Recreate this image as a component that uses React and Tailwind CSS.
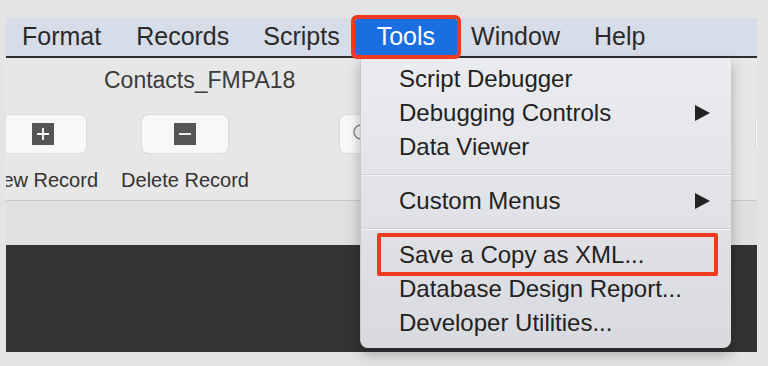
import React from "react";

const font = { fontFamily: '"Liberation Sans", Arial, sans-serif' };

const Arrow = () => (
  <svg width="15" height="16" viewBox="0 0 15 16" className="shrink-0">
    <polygon points="0,0 15,8 0,16" fill="#222" />
  </svg>
);

const MenuItem = ({ label, arrow, boxed }) => (
  <div className="relative flex h-[34px] items-center pl-[38px] pr-[21px] text-[24px] text-[#222]">
    <span className="flex-1 whitespace-nowrap">{label}</span>
    {arrow && <Arrow />}
    {boxed && (
      <div className="absolute -top-[5px] -bottom-[4px] left-[16px] right-[13px] rounded-[2px] border-[4px] border-[#f03a1f]" />
    )}
  </div>
);

const Separator = () => (
  <div className="mb-[9px] mt-[10px] h-[1px] bg-[#cfd0d5] shadow-[0_1px_0_#f4f4f6]" />
);

const ToolButton = ({ children, label, className, btnClassName = "justify-center" }) => (
  <div className={`flex w-[120px] shrink-0 flex-col items-center ${className}`}>
    <div
      className={`flex h-[38px] w-[86px] items-center rounded-[6px] bg-[#f8f8f8] shadow-[0_0_0_1px_#dadada] ${btnClassName}`}
    >
      {children}
    </div>
    {label && (
      <div className="mt-[15px] h-[24px] whitespace-nowrap text-[20px] leading-[24px] text-[#333]">
        {label}
      </div>
    )}
  </div>
);

export default function App() {
  return (
    <div
      className="h-[366px] w-[768px] overflow-hidden bg-[#e4e4e4] pl-[6px] pt-[18px]"
      style={font}
    >
      <div className="relative flex h-[334px] w-[751px] flex-col">
        {/* menu bar */}
        <div className="flex h-[40px] shrink-0 items-center border-b-[2px] border-[#2e2e2e] bg-[#d6dde9] pl-[16px] text-[25px] text-[#2a2a2a]">
          <span>Format</span>
          <span className="ml-[35px]">Records</span>
          <span className="ml-[34px]">Scripts</span>
          <span className="relative z-20 ml-[15px] flex h-[36px] items-center rounded-[2px] bg-[#1a6fe0] px-[22px] text-white outline outline-[4px] outline-[#f03a1f]">
            Tools
          </span>
          <span className="ml-[14px]">Window</span>
          <span className="ml-[34px]">Help</span>
        </div>

        {/* window body */}
        <div className="flex flex-1 flex-col overflow-hidden bg-[#e7e7e7]">
          <div className="flex h-[44px] shrink-0 items-center pl-[98px] text-[23px] text-[#3b3b3b]">
            Contacts_FMPA18
          </div>
          <div className="mt-[13px] flex h-[85px] shrink-0">
            <ToolButton label="New Record" className="ml-[-23px]">
              <div className="flex h-[22px] w-[22px] items-center justify-center bg-[#555]">
                <svg width="14" height="14" viewBox="0 0 14 14">
                  <path d="M7 1v12M1 7h12" stroke="#fff" strokeWidth="1.8" />
                </svg>
              </div>
            </ToolButton>
            <ToolButton label="Delete Record" className="ml-[22px]">
              <div className="flex h-[22px] w-[22px] items-center justify-center bg-[#555]">
                <svg width="14" height="14" viewBox="0 0 14 14">
                  <path d="M1 7h12" stroke="#fff" strokeWidth="1.8" />
                </svg>
              </div>
            </ToolButton>
            <ToolButton className="ml-[78px]" btnClassName="justify-start pl-[12px]">
              <svg width="22" height="22" viewBox="0 0 22 22">
                <circle cx="9" cy="9" r="7" fill="none" stroke="#888" strokeWidth="1.5" />
                <path d="M14 14l6 6" stroke="#888" strokeWidth="1.5" />
              </svg>
            </ToolButton>
            <ToolButton className="ml-[296px]">
              <span />
            </ToolButton>
          </div>
          <div className="h-[45px] shrink-0 border-t border-[#c9c9c9] bg-[#e0e0e0]" />
          <div className="flex-1 bg-[#333333]" />
        </div>

        {/* dropdown */}
        <div className="absolute left-[354px] top-[40px] z-10 h-[290px] w-[371px] rounded-b-[8px] border-l border-[#c8c8cc] bg-gradient-to-b from-[#ebecf0] to-[#d9dadf] pt-[4px] shadow-[0_6px_14px_rgba(0,0,0,0.28)]">
          <MenuItem label="Script Debugger" />
          <MenuItem label="Debugging Controls" arrow />
          <MenuItem label="Data Viewer" />
          <Separator />
          <MenuItem label="Custom Menus" arrow />
          <Separator />
          <MenuItem label="Save a Copy as XML..." boxed />
          <MenuItem label="Database Design Report..." />
          <MenuItem label="Developer Utilities..." />
        </div>
      </div>
    </div>
  );
}
